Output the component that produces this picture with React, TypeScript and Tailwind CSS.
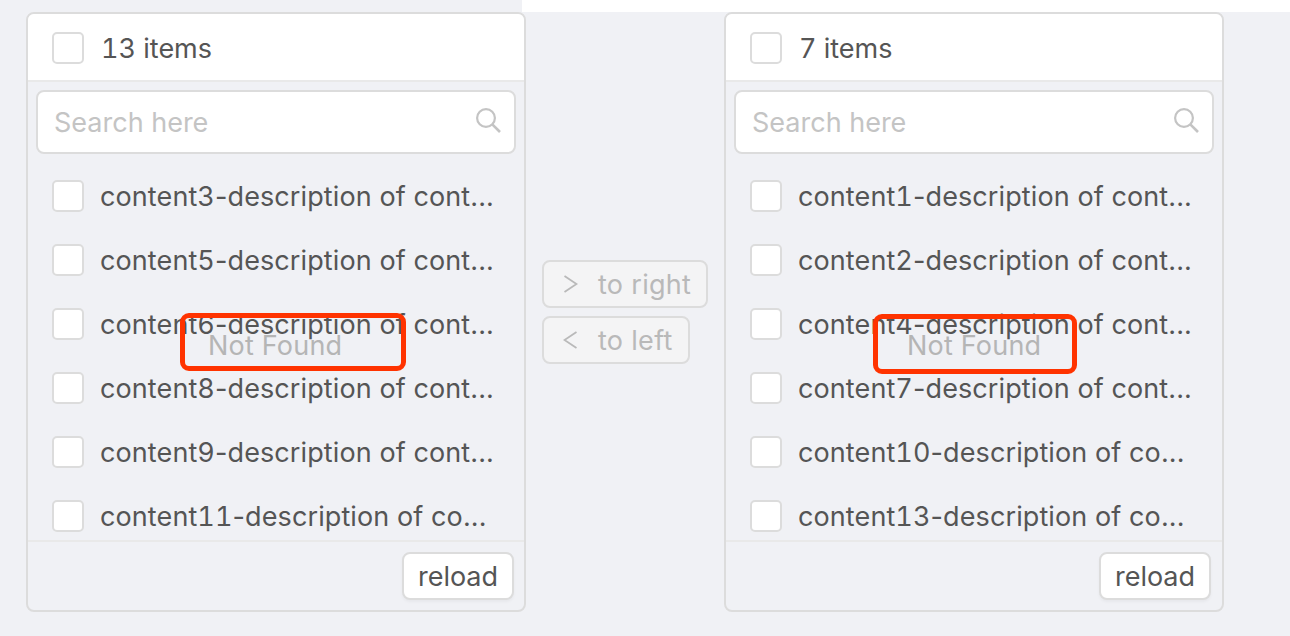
const leftItems = [
    'content3-description of cont...',
    'content5-description of cont...',
    'content6-description of cont...',
    'content8-description of cont...',
    'content9-description of cont...',
    'content11-description of co...'
];

const rightItems = [
    'content1-description of cont...',
    'content2-description of cont...',
    'content4-description of cont...',
    'content7-description of cont...',
    'content10-description of co...',
    'content13-description of co...'
];

const Checkbox = () => (
    <span className="w-8 h-8 shrink-0 bg-white border-2 border-[#dcdcdc] rounded-[5px]"></span>
);

const SearchIcon = () => (
    <svg className="w-[26px] h-[26px] shrink-0 mb-0.5 text-[#c4c4c4]" viewBox="0 0 26 26" fill="none" stroke="currentColor" strokeWidth="2.2">
        <circle cx="10" cy="10" r="8.9" />
        <line x1="16.3" y1="16.3" x2="24" y2="24" strokeWidth="2.6" />
    </svg>
);

// One side of the transfer box
const TransferPanel = ({ count, items, marker, footerPad }: { count: string; items: string[]; marker: string; footerPad: string }) => (
    <div className="relative w-[500px] h-[600px] shrink-0 flex flex-col border-2 border-[#dcdcdc] rounded-lg bg-[#f0f1f5]">
        {/* Header */}
        <div className="h-[68px] shrink-0 flex items-center gap-[17px] pl-6 pt-0.5 bg-white rounded-t-md border-b-2 border-[#e9e9e9]">
            <Checkbox />
            <span className="text-[27px] text-[#555555] tabular-nums pt-0.5">{count}</span>
        </div>

        {/* Search */}
        <div className="px-2 pt-2">
            <div className="h-16 flex items-center justify-between pl-4 pr-3 bg-white border-2 border-[#dcdcdc] rounded-lg">
                <span className="text-[27px] text-[#c4c4c4] pt-0.5">Search here</span>
                <SearchIcon />
            </div>
        </div>

        {/* List */}
        <div className="flex-1 min-h-0 overflow-hidden pt-[10px] pl-6">
            {items.map((item) => {
                const dash = item.indexOf('-');
                return (
                    <div key={item} className="h-16 flex items-center gap-4">
                        <Checkbox />
                        <span className="text-[27px] tracking-[0.1px] text-[#555555] whitespace-nowrap pt-0.5">
                            <span className="tabular-nums">{item.slice(0, dash)}</span>
                            {item.slice(dash)}
                        </span>
                    </div>
                );
            })}
        </div>

        {/* Footer */}
        <div className={`h-[70px] shrink-0 flex items-start justify-end pt-[10px] border-t-2 border-[#e9e9e9] ${footerPad}`}>
            <button className="w-28 h-12 bg-white border-2 border-[#dcdcdc] rounded-lg text-[27px] text-[#555555] leading-none shadow-[0_2px_3px_rgba(0,0,0,0.04)]">reload</button>
        </div>

        {/* Annotation over the list */}
        <div className={marker}>
            <span className="text-[27px] tracking-[0.2px] text-[#b5b5b5] leading-none">Not Found</span>
        </div>
    </div>
);

const App = () => {
    return (
        <div className="w-[1290px] h-[636px] overflow-hidden bg-[#f0f1f5]" style={{ fontFamily: 'Inter, "Liberation Sans", sans-serif' }}>
            <div className="h-3 ml-[522px] bg-white"></div>
            <div className="flex pl-[26px]">
                <TransferPanel
                    count="13 items"
                    items={leftItems}
                    footerPad="pr-[10px]"
                    marker="absolute left-[152px] top-[299px] w-[226px] h-[58px] pl-[23px] pt-[14px] border-[5px] border-[#ff3300] rounded-[9px]"
                />

                {/* Transfer buttons */}
                <div className="w-[198px] shrink-0 flex flex-col items-start gap-2 pl-4 pt-[248px]">
                    <button className="w-[166px] h-12 flex items-center pl-[19px] gap-5 bg-[#f4f4f5] border-2 border-[#dcdcdc] rounded-lg text-[27px] tracking-[0.3px] text-[#b9b9b9]">
                        <svg className="w-[15px] h-5 shrink-0" viewBox="0 0 15 20" fill="none" stroke="currentColor" strokeWidth="1.8">
                            <polyline points="1.5,2 13.5,10 1.5,18" />
                        </svg>
                        <span className="pt-0.5">to right</span>
                    </button>
                    <button className="w-[148px] h-12 flex items-center pl-[19px] gap-5 bg-[#f4f4f5] border-2 border-[#dcdcdc] rounded-lg text-[27px] tracking-[0.3px] text-[#b9b9b9]">
                        <svg className="w-[15px] h-5 shrink-0" viewBox="0 0 15 20" fill="none" stroke="currentColor" strokeWidth="1.8">
                            <polyline points="13.5,2 1.5,10 13.5,18" />
                        </svg>
                        <span className="pt-0.5">to left</span>
                    </button>
                </div>

                <TransferPanel
                    count="7 items"
                    items={rightItems}
                    footerPad="pr-[11px]"
                    marker="absolute left-[147px] top-[300px] w-[204px] h-[60px] pl-[29px] pt-[13px] border-[5px] border-[#ff3300] rounded-[9px]"
                />
            </div>
        </div>
    );
};

export default App;
